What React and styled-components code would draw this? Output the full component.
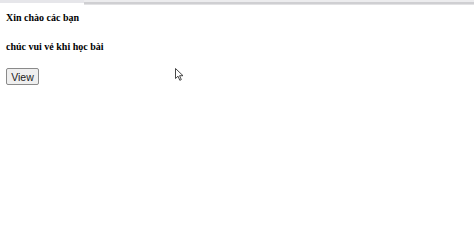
import React from "react";
import styled, { createGlobalStyle } from "styled-components";

const GlobalStyle = createGlobalStyle`
  body {
    margin: 0;
    background: #ffffff;
    font-family: "Liberation Serif", "Times New Roman", serif;
  }
`;

const Page = styled.div`
  position: relative;
  width: 474px;
  height: 249px;
  background: #fff;
  overflow: hidden;
`;

const TabStrip = styled.div`
  display: flex;
  height: 5px;
`;

const ActiveTab = styled.div`
  width: 84px;
  height: 3px;
  background: #e6e6ea;
`;

const TabRail = styled.div`
  flex: 1;
  height: 5px;
  background: linear-gradient(#ececee 0, #ececee 2px, #cfcfd2 2px, #cfcfd2 4px, #e2e2e4 4px);
`;

const Content = styled.div`
  display: flex;
  flex-direction: column;
  align-items: flex-start;
  padding: 7px 0 0 6px;
`;

const Heading = styled.h4`
  margin: 0 0 ${(p) => p.$gap || 0}px 0;
  font-size: 10px;
  line-height: 12px;
  font-weight: bold;
  color: #000;
`;

const ViewButton = styled.button`
  width: 33px;
  height: 17px;
  padding: 0;
  font-family: "Liberation Sans", Arial, sans-serif;
  font-size: 10.5px;
  color: #1a1a1a;
  background: #efefef;
  border: 1px solid #8a8a8a;
  border-radius: 2px;
`;

const Cursor = styled.svg`
  position: absolute;
  left: 175px;
  top: 68px;
`;

export default function App() {
  return (
    <Page>
      <GlobalStyle />
      <TabStrip>
        <ActiveTab />
        <TabRail />
      </TabStrip>
      <Content>
        <Heading $gap={17}>Xin chào các bạn</Heading>
        <Heading $gap={15}>chúc vui vẻ khi học bài</Heading>
        <ViewButton>View</ViewButton>
      </Content>
      <Cursor width="9" height="13" viewBox="0 0 9 13">
        <path d="M0.5 0.5 L0.5 10.5 L3 8.2 L4.8 12.3 L6.3 11.6 L4.6 7.7 L8 7.7 Z" fill="#fff" stroke="#333" strokeWidth="0.9" strokeLinejoin="round" />
      </Cursor>
    </Page>
  );
}
